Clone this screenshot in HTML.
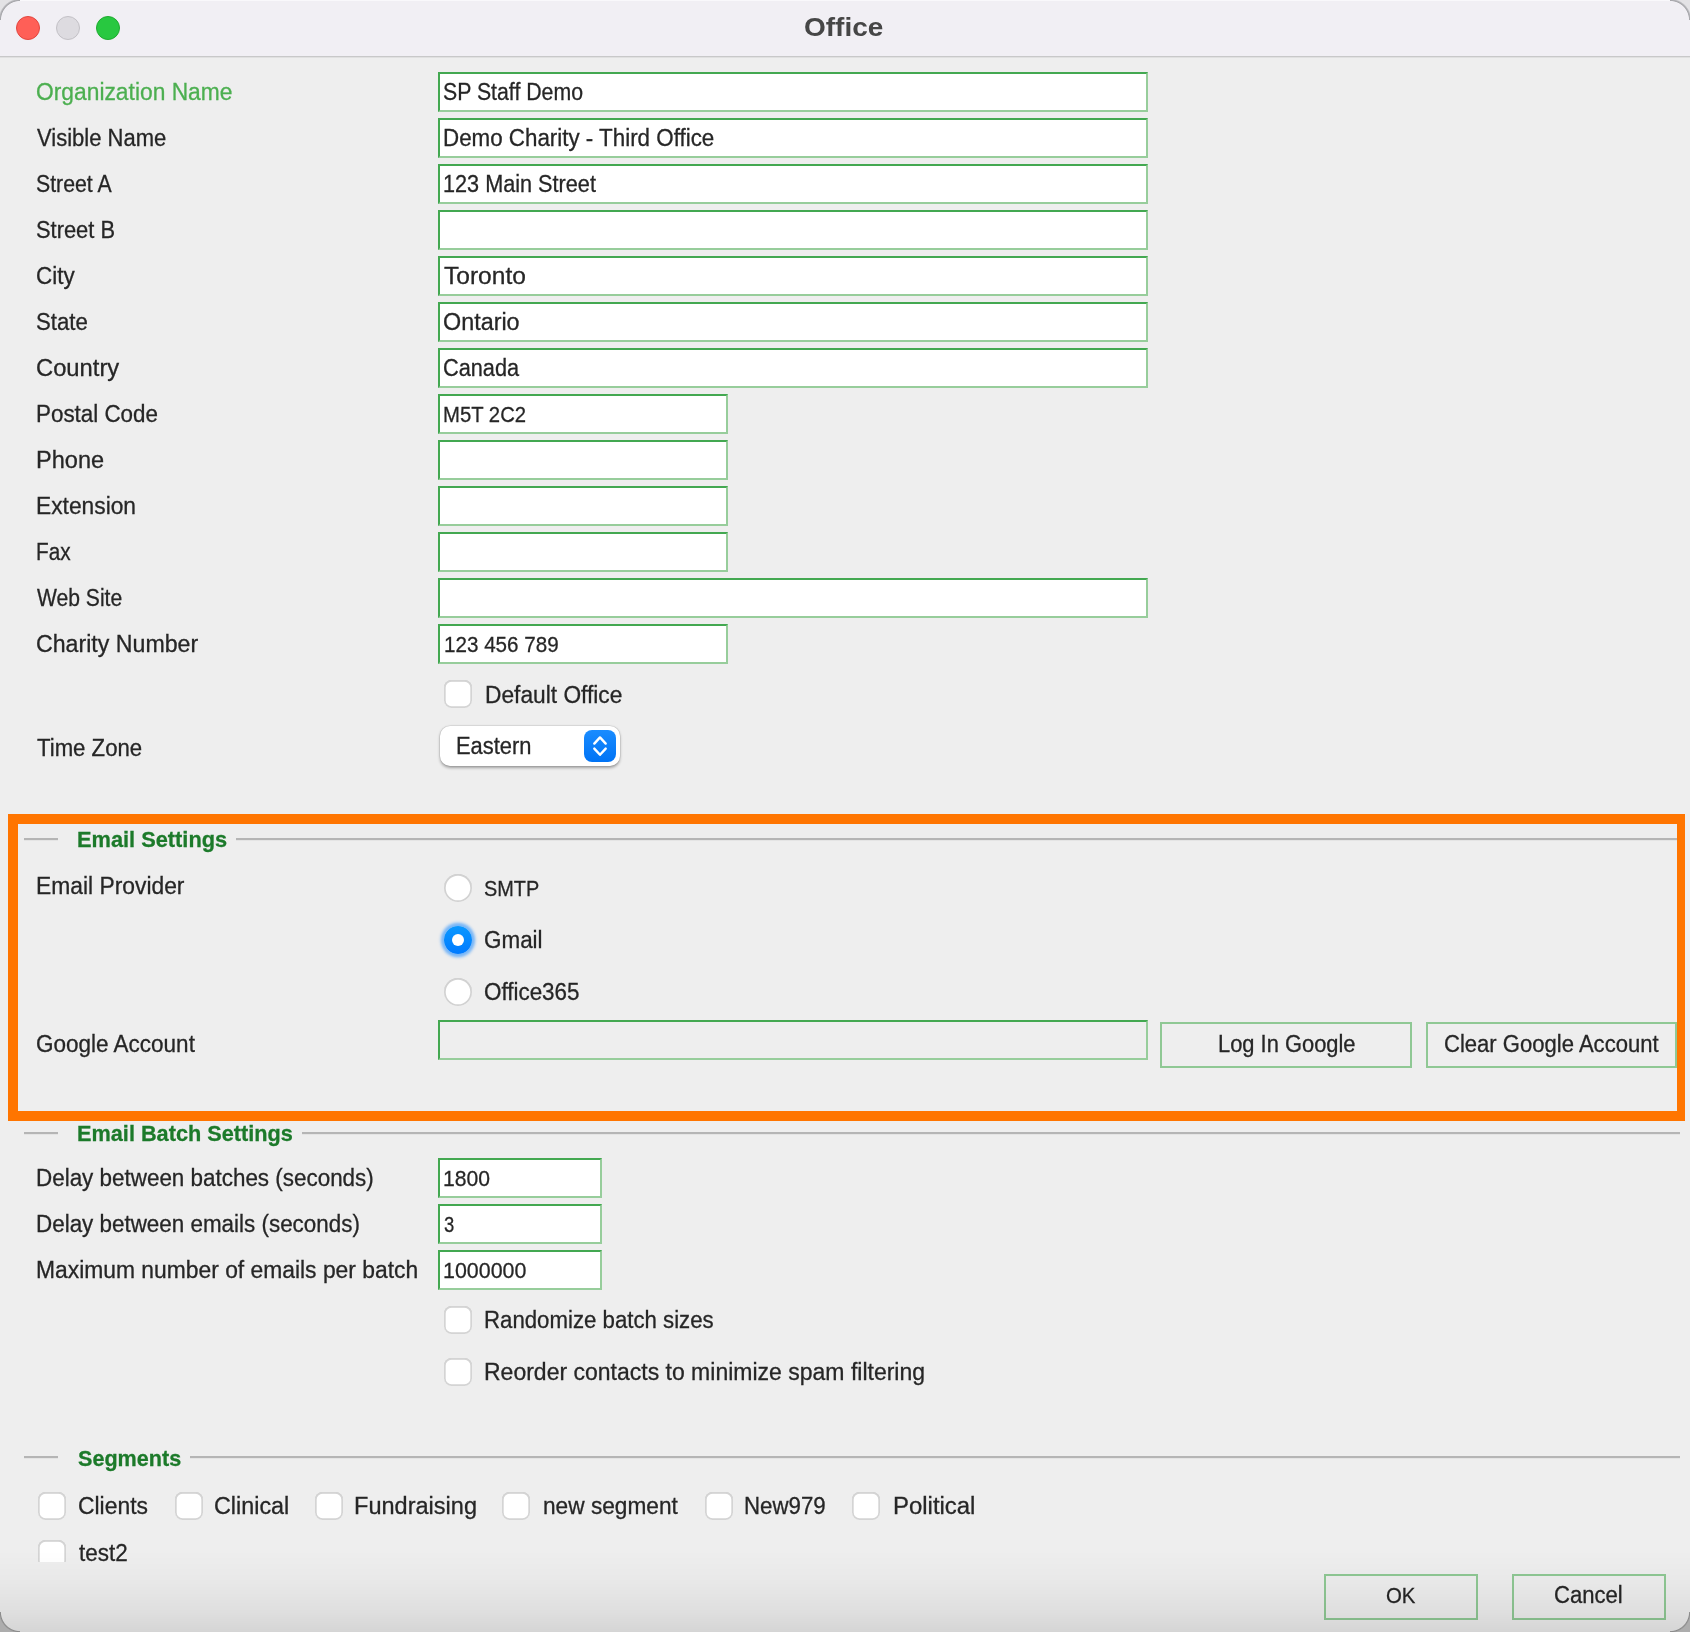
<!DOCTYPE html>
<html><head><meta charset="utf-8"><title>Office</title>
<style>
html,body{margin:0;padding:0}
body{width:1690px;height:1632px;position:relative;overflow:hidden;background:#eeeeee;font-family:"Liberation Sans",sans-serif;font-size:24px;color:#262626}
.tb{position:absolute;left:0;top:0;width:1690px;height:56px;background:#f1eff4;border-bottom:1px solid #c8c8c9;box-shadow:inset 0 1px 0 #f9f8fb,0 1px 0 #e0e0e0}
.tl{position:absolute;top:16px;width:24px;height:24px;border-radius:50%;box-sizing:border-box}
.tx{position:absolute;left:0;top:0;width:1690px;height:1632px;will-change:transform}
.t{position:absolute;white-space:nowrap;-webkit-text-stroke:0.3px;transform-origin:0 22px;line-height:normal}
.f{position:absolute;box-sizing:border-box;background:#fff;border:2px solid;border-color:#43a851 #97cd9b #97cd9b #43a851}
.fd{background:transparent}
.b{position:absolute;box-sizing:border-box;border:2px solid #8fc894}
.cb{position:absolute;width:28px;height:28px;border-radius:7.5px;background:#fff;box-shadow:inset 0 0 0 1.7px #d4d4d4,inset 0 1.2px 0.6px #c6c6c6}
.rb{position:absolute;width:28px;height:28px;border-radius:50%;background:#fff;box-shadow:inset 0 0 0 1.7px #d2d2d2,inset 0 1px 0.6px #c8c8c8}
.rb.on{background:linear-gradient(#0a98ff,#007aff);box-shadow:0 0 3px 3.2px rgba(20,135,255,.55)}
.rb.on i{position:absolute;left:8px;top:8px;width:12px;height:12px;border-radius:50%;background:#fff}
.sel{position:absolute;background:#fff;border-radius:10px;box-shadow:0 0 0 0.5px rgba(0,0,0,.1),0 1.5px 3px rgba(0,0,0,.32)}
.selb{position:absolute;right:4px;top:4px;width:32px;height:32px;border-radius:8px;background:linear-gradient(#1a8cff,#0073f5)}
.ln{position:absolute;height:2px;background:#b5b5b5;box-shadow:0 1px 0 #e4e4e4}
.grad{position:absolute;left:0;top:1550px;width:1690px;height:82px;background:linear-gradient(rgba(0,0,0,0),rgba(0,0,0,.025) 40%,rgba(0,0,0,.055) 70%,rgba(0,0,0,.1))}
.or{position:absolute;left:8px;top:814px;width:1677px;height:307px;box-sizing:border-box;border:10px solid #ff7500;border-right-width:8px}
.c{position:absolute;width:20px;height:20px}
</style></head><body>
<div class="tb"></div>
<div class="tl" style="left:16px;background:#ff5f57;border:1px solid #e2463f"></div>
<div class="tl" style="left:56px;background:#dddbe0;border:1px solid #c3c1c6"></div>
<div class="tl" style="left:96px;background:#28c840;border:1px solid #1eab2f"></div>
<div class="f" style="left:438px;top:72px;width:710px;height:40px"></div>
<div class="f" style="left:438px;top:118px;width:710px;height:40px"></div>
<div class="f" style="left:438px;top:164px;width:710px;height:40px"></div>
<div class="f" style="left:438px;top:210px;width:710px;height:40px"></div>
<div class="f" style="left:438px;top:256px;width:710px;height:40px"></div>
<div class="f" style="left:438px;top:302px;width:710px;height:40px"></div>
<div class="f" style="left:438px;top:348px;width:710px;height:40px"></div>
<div class="f" style="left:438px;top:394px;width:290px;height:40px"></div>
<div class="f" style="left:438px;top:440px;width:290px;height:40px"></div>
<div class="f" style="left:438px;top:486px;width:290px;height:40px"></div>
<div class="f" style="left:438px;top:532px;width:290px;height:40px"></div>
<div class="f" style="left:438px;top:578px;width:710px;height:40px"></div>
<div class="f" style="left:438px;top:624px;width:290px;height:40px"></div>
<div class="f fd" style="left:438px;top:1020px;width:710px;height:40px"></div>
<div class="f" style="left:438px;top:1158px;width:164px;height:40px"></div>
<div class="f" style="left:438px;top:1204px;width:164px;height:40px"></div>
<div class="f" style="left:438px;top:1250px;width:164px;height:40px"></div>
<div class="b" style="left:1160px;top:1022px;width:252px;height:46px"></div>
<div class="b" style="left:1426px;top:1022px;width:251px;height:46px"></div>
<div class="b" style="left:1324px;top:1574px;width:154px;height:46px"></div>
<div class="b" style="left:1512px;top:1574px;width:154px;height:46px"></div>
<div class="cb" style="left:444px;top:680px;"></div>
<div class="cb" style="left:444px;top:1306px;"></div>
<div class="cb" style="left:444px;top:1358px;"></div>
<div class="cb" style="left:38px;top:1492px;"></div>
<div class="cb" style="left:174.5px;top:1492px;"></div>
<div class="cb" style="left:314.5px;top:1492px;"></div>
<div class="cb" style="left:502px;top:1492px;"></div>
<div class="cb" style="left:704.5px;top:1492px;"></div>
<div class="cb" style="left:852px;top:1492px;"></div>
<div style="position:absolute;left:30px;top:1530px;width:60px;height:32px;overflow:hidden"><div class="cb" style="left:8px;top:10px"></div></div>
<div class="rb" style="left:444px;top:874px"></div>
<div class="rb on" style="left:444px;top:926px"><i></i></div>
<div class="rb" style="left:444px;top:978px"></div>
<div class="sel" style="left:440px;top:726px;width:180px;height:40px"><div class="selb"><svg width="32" height="32" viewBox="0 0 32 32"><path d="M10.3 13.6 L16 7.4 L21.7 13.6 M10.3 18.6 L16 24.8 L21.7 18.6" fill="none" stroke="#fff" stroke-width="2.4" stroke-linecap="round" stroke-linejoin="round"/></svg></div></div>
<div class="ln" style="left:24px;top:838px;width:34px"></div><div class="ln" style="left:236px;top:838px;width:1444px"></div>
<div class="ln" style="left:24px;top:1132px;width:34px"></div><div class="ln" style="left:302px;top:1132px;width:1378px"></div>
<div class="ln" style="left:24px;top:1456px;width:34px"></div><div class="ln" style="left:190px;top:1456px;width:1490px"></div>
<div class="tx">
<span class="t" style="left:35.95px;top:78.00px;transform:scale(0.9503,0.96);color:#4caf50;">Organization Name</span>
<span class="t" style="left:36.90px;top:124.00px;transform:scale(0.9167,0.96);">Visible Name</span>
<span class="t" style="left:36.01px;top:170.00px;transform:scale(0.8857,0.96);">Street A</span>
<span class="t" style="left:35.99px;top:216.00px;transform:scale(0.9115,0.96);">Street B</span>
<span class="t" style="left:35.97px;top:262.00px;transform:scale(0.9347,0.96);">City</span>
<span class="t" style="left:35.97px;top:308.00px;transform:scale(0.9252,0.96);">State</span>
<span class="t" style="left:35.91px;top:354.00px;transform:scale(0.9899,0.96);">Country</span>
<span class="t" style="left:35.97px;top:400.00px;transform:scale(0.9328,0.96);">Postal Code</span>
<span class="t" style="left:35.92px;top:446.00px;transform:scale(0.9816,0.96);">Phone</span>
<span class="t" style="left:35.95px;top:492.00px;transform:scale(0.9490,0.96);">Extension</span>
<span class="t" style="left:36.04px;top:538.00px;transform:scale(0.8639,0.96);">Fax</span>
<span class="t" style="left:36.90px;top:584.00px;transform:scale(0.8790,0.96);">Web Site</span>
<span class="t" style="left:35.94px;top:630.00px;transform:scale(0.9650,0.96);">Charity Number</span>
<span class="t" style="left:36.90px;top:733.50px;transform:scale(0.9236,0.96);">Time Zone</span>
<span class="t" style="left:442.71px;top:78.00px;transform:scale(0.8869,0.96);">SP Staff Demo</span>
<span class="t" style="left:442.67px;top:124.00px;transform:scale(0.9315,0.96);">Demo Charity - Third Office</span>
<span class="t" style="left:443.30px;top:170.00px;transform:scale(0.9025,0.96);">123 Main Street</span>
<span class="t" style="left:443.60px;top:262.00px;transform:scale(1.0225,0.96);">Toronto</span>
<span class="t" style="left:442.63px;top:308.00px;transform:scale(0.9734,0.96);">Ontario</span>
<span class="t" style="left:442.69px;top:354.00px;transform:scale(0.9054,0.96);">Canada</span>
<span class="t" style="left:442.75px;top:400.00px;transform:scale(0.8454,0.95);">M5T 2C2</span>
<span class="t" style="left:443.54px;top:630.00px;transform:scale(0.8591,0.95);">123 456 789</span>
<span class="t" style="left:484.85px;top:681.00px;transform:scale(0.9477,0.96);">Default Office</span>
<span class="t" style="left:456.49px;top:732.00px;transform:scale(0.9134,0.96);">Eastern</span>
<span class="t" style="left:76.89px;top:825.30px;transform:scale(0.9078,0.9);color:#1c7a2a;font-weight:bold;">Email Settings</span>
<span class="t" style="left:35.95px;top:872.00px;transform:scale(0.9513,0.96);">Email Provider</span>
<span class="t" style="left:484.47px;top:873.60px;transform:scale(0.8289,0.95);">SMTP</span>
<span class="t" style="left:484.37px;top:925.70px;transform:scale(0.9347,0.96);">Gmail</span>
<span class="t" style="left:484.37px;top:977.90px;transform:scale(0.9332,0.96);">Office365</span>
<span class="t" style="left:35.96px;top:1029.60px;transform:scale(0.9376,0.96);">Google Account</span>
<span class="t" style="left:1218.49px;top:1030.40px;transform:scale(0.9121,0.96);">Log In Google</span>
<span class="t" style="left:1444.48px;top:1030.40px;transform:scale(0.9192,0.96);">Clear Google Account</span>
<span class="t" style="left:76.90px;top:1119.00px;transform:scale(0.9045,0.9);color:#1c7a2a;font-weight:bold;">Email Batch Settings</span>
<span class="t" style="left:35.97px;top:1164.00px;transform:scale(0.9342,0.96);">Delay between batches (seconds)</span>
<span class="t" style="left:35.97px;top:1210.00px;transform:scale(0.9338,0.96);">Delay between emails (seconds)</span>
<span class="t" style="left:35.95px;top:1256.00px;transform:scale(0.9518,0.96);">Maximum number of emails per batch</span>
<span class="t" style="left:443.02px;top:1164.00px;transform:scale(0.8820,0.95);">1800</span>
<span class="t" style="left:443.70px;top:1210.00px;transform:scale(0.7692,0.95);">3</span>
<span class="t" style="left:443.01px;top:1256.00px;transform:scale(0.8926,0.95);">1000000</span>
<span class="t" style="left:484.47px;top:1306.00px;transform:scale(0.9255,0.96);">Randomize batch sizes</span>
<span class="t" style="left:484.44px;top:1358.20px;transform:scale(0.9584,0.96);">Reorder contacts to minimize spam filtering</span>
<span class="t" style="left:77.50px;top:1444.00px;transform:scale(0.8998,0.9);color:#1c7a2a;font-weight:bold;">Segments</span>
<span class="t" style="left:78.15px;top:1492.30px;transform:scale(0.9536,0.96);">Clients</span>
<span class="t" style="left:214.13px;top:1492.30px;transform:scale(0.9730,0.96);">Clinical</span>
<span class="t" style="left:354.12px;top:1492.30px;transform:scale(0.9809,0.96);">Fundraising</span>
<span class="t" style="left:542.76px;top:1492.30px;transform:scale(0.9446,0.96);">new segment</span>
<span class="t" style="left:744.27px;top:1492.30px;transform:scale(0.9273,0.96);">New979</span>
<span class="t" style="left:892.50px;top:1492.30px;transform:scale(0.9967,0.96);">Political</span>
<span class="t" style="left:79.10px;top:1539.40px;transform:scale(0.9365,0.96);">test2</span>
<span class="t" style="left:1386.35px;top:1581.40px;transform:scale(0.8495,0.95);">OK</span>
<span class="t" style="left:1554.28px;top:1581.40px;transform:scale(0.9202,0.96);">Cancel</span>
<span class="t" style="left:803.74px;top:11.50px;transform:scale(1.0564,1);font-size:26.5px;color:#464646;font-weight:bold;-webkit-text-stroke:0;">Office</span>
</div>
<div class="grad"></div>
<div class="or"></div>
<div class="c" style="left:0;top:0;background:radial-gradient(circle at 20px 20px,transparent 18.6px,#a6a6aa 19.4px,#b4b4b8 20.3px,#e3e2e5 21.5px)"></div>
<div class="c" style="right:0;top:0;background:radial-gradient(circle at 0 20px,transparent 18.6px,#a6a6aa 19.4px,#b4b4b8 20.3px,#e3e2e5 21.5px)"></div>
<div class="c" style="left:0;bottom:0;background:radial-gradient(circle at 20px 0,transparent 18.6px,#8a8a8a 19.6px,#adadad 21px)"></div>
<div class="c" style="right:0;bottom:0;background:radial-gradient(circle at 0 0,transparent 18.6px,#8a8a8a 19.6px,#adadad 21px)"></div>
</body></html>
